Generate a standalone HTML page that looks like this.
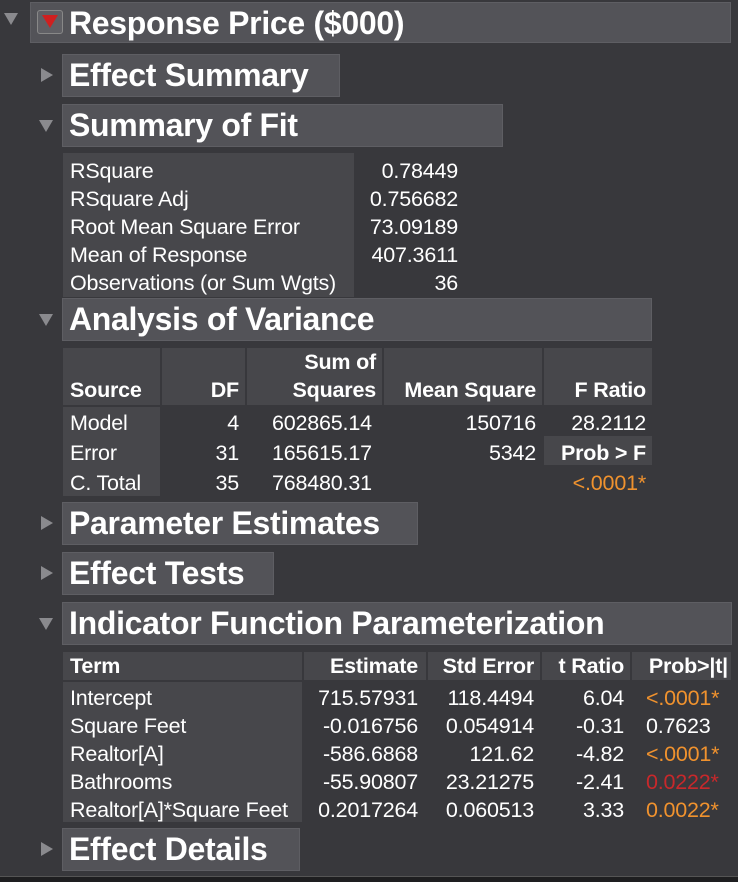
<!DOCTYPE html>
<html><head><meta charset="utf-8"><style>
body{margin:0;width:738px;height:882px;background:#38383c;position:relative;overflow:hidden;font-family:"Liberation Sans",Arial,sans-serif;color:#fff}
div{position:absolute;box-sizing:border-box}
.hb{background:#535358;border:1px solid #5e5e63;font-weight:bold;font-size:32px;padding-left:6px;line-height:40px;white-space:nowrap;letter-spacing:-0.3px}
.tri{width:0;height:0}
.down{border-left:7px solid transparent;border-right:7px solid transparent;border-top:12px solid #8a8a8e}
.right{border-top:7px solid transparent;border-bottom:7px solid transparent;border-left:12px solid #8a8a8e}
.c{background:#47474b}
.t{font-size:21.5px;line-height:28px;white-space:nowrap;letter-spacing:-0.2px}
.b{font-weight:bold}
.r{text-align:right}
.o{color:#f0922e}.red{color:#c8282b}
</style></head><body>
<div class="tri down" style="left:4px;top:13px"></div>
<div class="hb" style="left:30px;top:2px;width:701px;height:41px;padding-left:38px">Response Price ($000)</div>
<div style="left:37px;top:10px;width:26px;height:24px;border:1px solid #888;border-radius:3px;background:#606065"></div>
<div class="tri" style="left:42px;top:15px;border-left:8px solid transparent;border-right:8px solid transparent;border-top:13px solid #d02020"></div>

<div class="tri right" style="left:41px;top:68px"></div>
<div class="hb" style="left:62px;top:54px;width:278px;height:43px">Effect Summary</div>
<div class="tri down" style="left:39px;top:120px"></div>
<div class="hb" style="left:62px;top:104px;width:441px;height:43px">Summary of Fit</div>

<div class="c" style="left:63px;top:153px;width:291px;height:144px"></div>
<div class="t" style="left:70px;top:157px">RSquare<br>RSquare Adj<br>Root Mean Square Error<br>Mean of Response<br>Observations (or Sum Wgts)</div>
<div class="t r" style="left:355px;top:157px;width:103px">0.78449<br>0.756682<br>73.09189<br>407.3611<br>36</div>

<div class="tri down" style="left:39px;top:314px"></div>
<div class="hb" style="left:62px;top:298px;width:590px;height:43px">Analysis of Variance</div>

<div class="c" style="left:63px;top:348px;width:97px;height:57px"></div>
<div class="c" style="left:162px;top:348px;width:83px;height:57px"></div>
<div class="c" style="left:247px;top:348px;width:135px;height:57px"></div>
<div class="c" style="left:384px;top:348px;width:158px;height:57px"></div>
<div class="c" style="left:544px;top:348px;width:108px;height:57px"></div>
<div class="c" style="left:63px;top:407px;width:97px;height:89px"></div>
<div class="c" style="left:544px;top:436px;width:108px;height:29px"></div>
<div class="t b" style="left:70px;top:376px">Source</div>
<div class="t b r" style="left:162px;top:376px;width:77px">DF</div>
<div class="t b r" style="left:247px;top:348px;width:129px">Sum of<br>Squares</div>
<div class="t b r" style="left:384px;top:376px;width:152px">Mean Square</div>
<div class="t b r" style="left:544px;top:376px;width:102px">F Ratio</div>
<div class="t" style="left:70px;top:408px;line-height:30px">Model<br>Error<br>C. Total</div>
<div class="t r" style="left:162px;top:408px;width:77px;line-height:30px">4<br>31<br>35</div>
<div class="t" style="left:272px;top:408px;line-height:30px">602865.14<br>165615.17<br>768480.31</div>
<div class="t r" style="left:384px;top:408px;width:152px;line-height:30px">150716<br>5342</div>
<div class="t r" style="left:544px;top:408px;width:102px;line-height:30px">28.2112<br><b>Prob &gt; F</b><br><span class="o">&lt;.0001*</span></div>

<div class="tri right" style="left:41px;top:516px"></div>
<div class="hb" style="left:62px;top:502px;width:356px;height:43px">Parameter Estimates</div>
<div class="tri right" style="left:41px;top:566px"></div>
<div class="hb" style="left:62px;top:552px;width:212px;height:43px">Effect Tests</div>
<div class="tri down" style="left:39px;top:618px"></div>
<div class="hb" style="left:62px;top:602px;width:670px;height:43px">Indicator Function Parameterization</div>

<div class="c" style="left:63px;top:652px;width:239px;height:28px"></div>
<div class="c" style="left:304px;top:652px;width:122px;height:28px"></div>
<div class="c" style="left:428px;top:652px;width:112px;height:28px"></div>
<div class="c" style="left:542px;top:652px;width:88px;height:28px"></div>
<div class="c" style="left:632px;top:652px;width:99px;height:28px"></div>
<div class="c" style="left:63px;top:682px;width:239px;height:140px"></div>
<div class="t b" style="left:70px;top:652px">Term</div>
<div class="t b r" style="left:304px;top:652px;width:114px">Estimate</div>
<div class="t b r" style="left:428px;top:652px;width:106px">Std Error</div>
<div class="t b r" style="left:542px;top:652px;width:82px">t Ratio</div>
<div class="t b r" style="left:632px;top:652px;width:96px">Prob&gt;|t|</div>
<div class="t" style="left:70px;top:684px">Intercept<br>Square Feet<br>Realtor[A]<br>Bathrooms<br>Realtor[A]*Square Feet</div>
<div class="t r" style="left:304px;top:684px;width:114px">715.57931<br>-0.016756<br>-586.6868<br>-55.90807<br>0.2017264</div>
<div class="t r" style="left:428px;top:684px;width:106px">118.4494<br>0.054914<br>121.62<br>23.21275<br>0.060513</div>
<div class="t r" style="left:542px;top:684px;width:82px">6.04<br>-0.31<br>-4.82<br>-2.41<br>3.33</div>
<div class="t" style="left:646px;top:684px"><span class="o">&lt;.0001*</span><br>0.7623<br><span class="o">&lt;.0001*</span><br><span class="red">0.0222*</span><br><span class="o">0.0022*</span></div>

<div class="tri right" style="left:41px;top:842px"></div>
<div class="hb" style="left:62px;top:828px;width:238px;height:43px">Effect Details</div>
<div style="left:0;top:876px;width:738px;height:6px;background:#1e1e20;border-top:1px solid #555"></div>
</body></html>
